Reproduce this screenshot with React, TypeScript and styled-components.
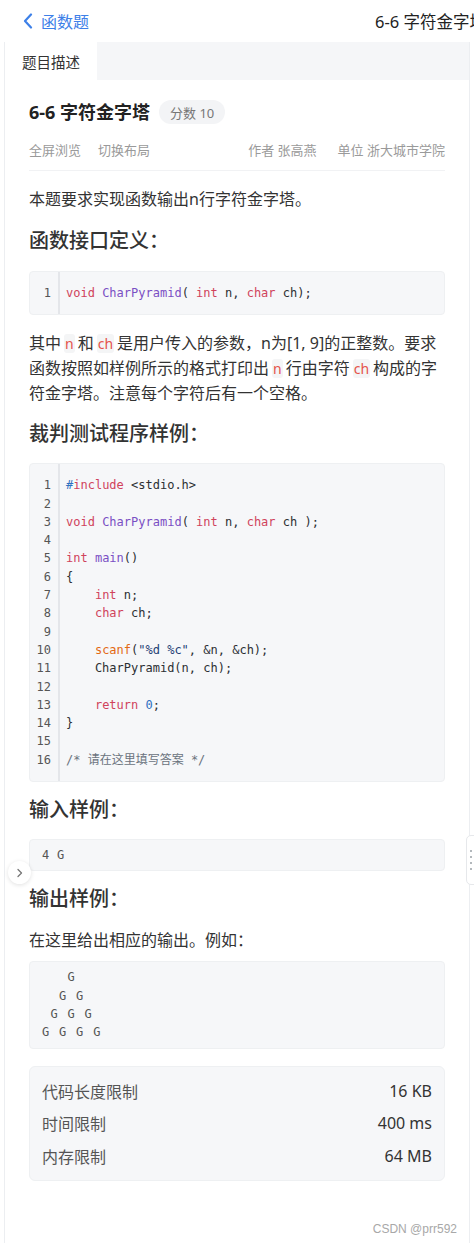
import React from "react";
import styled, { createGlobalStyle } from "styled-components";

const GlobalStyle = createGlobalStyle`
  html, body { margin: 0; padding: 0; background: #fff; }
  body {
    font-family: "Noto Sans", "Noto Sans CJK SC", sans-serif;
    color: #333;
    overflow-x: hidden;
  }
  * { box-sizing: border-box; }
`;

const Page = styled.div`
  position: relative;
  width: 474px;
  min-height: 1243px;
  background: #fff;
`;

const Header = styled.header`
  height: 42px;
  display: flex;
  align-items: center;
  overflow: hidden;
  background: #fff;
`;

const Back = styled.a`
  display: flex;
  align-items: center;
  gap: 8px;
  padding-left: 23px;
  color: #3d80e8;
  font-size: 16px;
  text-decoration: none;
  flex-shrink: 0;
`;

const HeaderTitle = styled.div`
  margin-left: 286px;
  flex-shrink: 0;
  white-space: nowrap;
  font-size: 16.5px;
  color: #222;
`;

const Panel = styled.section`
  margin: 0 4px;
  width: 466px;
  min-height: 1201px;
  border-left: 1px solid #eceef1;
  border-right: 1px solid #eceef1;
  display: flex;
  flex-direction: column;
`;

const TabBar = styled.div`
  height: 38px;
  background: #f5f6f8;
  display: flex;
`;

const Tab = styled.div`
  width: 92px;
  background: #fff;
  display: flex;
  align-items: center;
  justify-content: center;
  font-size: 14.5px;
  color: #333;
`;

const Body = styled.div`
  padding: 20px 24px 0;
  flex: 1;
`;

const TitleRow = styled.div`
  display: flex;
  align-items: center;
  height: 24px;
`;

const Title = styled.h1`
  margin: 0;
  font-size: 18px;
  font-weight: 700;
  color: #222;
  line-height: 24px;
`;

const Badge = styled.span`
  margin-left: 9px;
  height: 24px;
  padding: 0 11px;
  border-radius: 12px;
  background: #f3f4f6;
  color: #777;
  font-size: 13px;
  display: inline-flex;
  align-items: center;
`;

const MetaRow = styled.div`
  margin-top: 16px;
  padding-bottom: 10px;
  border-bottom: 1px solid #f1f2f4;
  display: flex;
  align-items: center;
  height: 31px;
  font-size: 13px;
  color: #9a9a9a;
  line-height: 20px;
`;

const MetaGroup = styled.div<{ $gap: number; $right?: boolean }>`
  display: flex;
  gap: ${(p) => p.$gap}px;
  margin-left: ${(p) => (p.$right ? "auto" : "0")};
`;

const Para = styled.p<{ $mt?: number }>`
  margin: ${(p) => p.$mt ?? 16}px 0 0;
  font-size: 16px;
  line-height: 25px;
  color: #333;
`;

const Heading = styled.h2<{ $mt?: number }>`
  margin: ${(p) => p.$mt ?? 14}px 0 0;
  font-size: 20px;
  font-weight: 500;
  line-height: 28px;
  color: #333;
`;

const InlineCode = styled.code`
  font-family: "Noto Sans", sans-serif;
  font-size: 14px;
  line-height: 18px;
  color: #e5534b;
  background: #f4f5f6;
  border-radius: 3px;
  padding: 0 1px;
  margin: 0 3px;
`;

const CodeBox = styled.div<{ $mt?: number }>`
  margin-top: ${(p) => p.$mt ?? 16}px;
  background: #f6f7f9;
  border: 1px solid #eef0f2;
  border-radius: 4px;
  display: flex;
  font-family: "DejaVu Sans Mono", "Noto Sans CJK SC", monospace;
  font-size: 12px;
  line-height: 18.3px;
`;

const Gutter = styled.div`
  width: 30px;
  padding: 12px 7px 12px 0;
  border-right: 2px solid #e4e6ea;
  text-align: right;
  color: #555;
`;

const CodeLines = styled.pre`
  margin: 0;
  padding: 12px 6px;
  font: inherit;
  color: #2c2f33;
  white-space: pre;
`;

const Tok = styled.span<{ $k: string }>`
  color: ${(p) =>
    ({
      kw: "#d0435c",
      fn: "#7a4fc4",
      call: "#e36a14",
      str: "#1f3f75",
      num: "#2e6fc0",
      hash: "#2e6fc0",
      com: "#6a737d",
      txt: "#2c2f33",
    } as Record<string, string>)[p.$k]};
`;

const SampleBox = styled.pre<{ $mt?: number; $spacing?: number }>`
  margin: ${(p) => p.$mt ?? 15}px 0 0;
  background: #f6f7f9;
  border: 1px solid #eef0f2;
  border-radius: 4px;
  padding: 6px 12px;
  font-family: "DejaVu Sans Mono", monospace;
  font-size: 12px;
  line-height: 18.3px;
  color: #555;
  letter-spacing: ${(p) => p.$spacing ?? 0.3}px;
`;

const Limits = styled.div`
  margin-top: 17px;
  background: #f6f7f9;
  border: 1px solid #eef0f2;
  border-radius: 6px;
  padding: 8px 12px 8px 12px;
`;

const LimitRow = styled.div`
  height: 32.5px;
  display: flex;
  align-items: center;
  justify-content: space-between;
  font-size: 16px;
`;

const LimitLabel = styled.span`
  color: #555;
`;

const LimitValue = styled.span`
  color: #333;
`;

const Watermark = styled.div`
  margin-top: 40px;
  padding: 0 12px 7px 0;
  text-align: right;
  font-family: "Liberation Sans", Arial, sans-serif;
  font-size: 12px;
  line-height: 16px;
  color: #a8a8a8;
`;

const SideToggle = styled.div`
  position: absolute;
  left: 8px;
  top: 861px;
  width: 23px;
  height: 23px;
  border-radius: 50%;
  background: #fff;
  box-shadow: 0 1px 4px rgba(0, 0, 0, 0.12);
  display: flex;
  align-items: center;
  justify-content: center;
`;

const SideHandle = styled.div`
  position: absolute;
  left: 466px;
  top: 835px;
  width: 14px;
  height: 50px;
  border-radius: 5px;
  background: #fff;
  border: 1px solid #e6e8eb;
  display: flex;
  flex-direction: column;
  align-items: flex-start;
  justify-content: center;
  gap: 4px;
  padding-left: 3px;
`;

const Dot = styled.span`
  width: 2px;
  height: 2px;
  border-radius: 50%;
  background: #9aa0a6;
`;

type Seg = [string, string];

const iface: Seg[][] = [
  [
    ["void", "kw"],
    [" ", "txt"],
    ["CharPyramid", "fn"],
    ["( ", "txt"],
    ["int", "kw"],
    [" n, ", "txt"],
    ["char", "kw"],
    [" ch);", "txt"],
  ],
];

const judge: Seg[][] = [
  [
    ["#", "hash"],
    ["include", "kw"],
    [" <stdio.h>", "txt"],
  ],
  [],
  [
    ["void", "kw"],
    [" ", "txt"],
    ["CharPyramid", "fn"],
    ["( ", "txt"],
    ["int", "kw"],
    [" n, ", "txt"],
    ["char", "kw"],
    [" ch );", "txt"],
  ],
  [],
  [
    ["int", "kw"],
    [" ", "txt"],
    ["main", "fn"],
    ["()", "txt"],
  ],
  [["{", "txt"]],
  [
    ["    ", "txt"],
    ["int", "kw"],
    [" n;", "txt"],
  ],
  [
    ["    ", "txt"],
    ["char", "kw"],
    [" ch;", "txt"],
  ],
  [],
  [
    ["    ", "txt"],
    ["scanf", "call"],
    ["(", "txt"],
    ['"%d %c"', "str"],
    [", &n, &ch);", "txt"],
  ],
  [["    CharPyramid(n, ch);", "txt"]],
  [],
  [
    ["    ", "txt"],
    ["return", "kw"],
    [" ", "txt"],
    ["0", "num"],
    [";", "txt"],
  ],
  [["}", "txt"]],
  [],
  [["/* 请在这里填写答案 */", "com"]],
];

function Code({ lines, mt }: { lines: Seg[][]; mt?: number }) {
  return (
    <CodeBox $mt={mt}>
      <Gutter>
        {lines.map((_, i) => (
          <div key={i}>{i + 1}</div>
        ))}
      </Gutter>
      <CodeLines>
        {lines.map((segs, i) => (
          <div key={i}>
            {segs.length === 0
              ? " "
              : segs.map(([t, k], j) => (
                  <Tok key={j} $k={k}>
                    {t}
                  </Tok>
                ))}
          </div>
        ))}
      </CodeLines>
    </CodeBox>
  );
}

export default function App() {
  return (
    <Page>
      <GlobalStyle />
      <Header>
        <Back>
          <svg width="10" height="16" viewBox="0 0 10 16" fill="none">
            <path d="M8 1.5L2 8l6 6.5" stroke="#3d80e8" strokeWidth="2.2" strokeLinecap="round" strokeLinejoin="round" />
          </svg>
          函数题
        </Back>
        <HeaderTitle>6-6 字符金字塔</HeaderTitle>
      </Header>
      <Panel>
        <TabBar>
          <Tab>题目描述</Tab>
        </TabBar>
        <Body>
          <TitleRow>
            <Title>6-6 字符金字塔</Title>
            <Badge>分数 10</Badge>
          </TitleRow>
          <MetaRow>
            <MetaGroup $gap={17}>
              <span>全屏浏览</span>
              <span>切换布局</span>
            </MetaGroup>
            <MetaGroup $gap={21} $right>
              <span>作者 张高燕</span>
              <span>单位 浙大城市学院</span>
            </MetaGroup>
          </MetaRow>
          <Para>本题要求实现函数输出n行字符金字塔。</Para>
          <Heading $mt={15}>函数接口定义：</Heading>
          <Code lines={iface} mt={16} />
          <Para>
            其中<InlineCode>n</InlineCode>和<InlineCode>ch</InlineCode>是用户传入的参数，n为[1, 9]的正整数。要求函数按照如样例所示的格式打印出<InlineCode>n</InlineCode>行由字符<InlineCode>ch</InlineCode>构成的字符金字塔。注意每个字符后有一个空格。
          </Para>
          <Heading>裁判测试程序样例：</Heading>
          <Code lines={judge} mt={15} />
          <Heading>输入样例：</Heading>
          <SampleBox>4 G</SampleBox>
          <Heading>输出样例：</Heading>
          <Para $mt={15}>在这里给出相应的输出。例如：</Para>
          <SampleBox $mt={8} $spacing={1.3}>{"   G\n  G G\n G G G\nG G G G"}</SampleBox>
          <Limits>
            <LimitRow>
              <LimitLabel>代码长度限制</LimitLabel>
              <LimitValue>16 KB</LimitValue>
            </LimitRow>
            <LimitRow>
              <LimitLabel>时间限制</LimitLabel>
              <LimitValue>400 ms</LimitValue>
            </LimitRow>
            <LimitRow>
              <LimitLabel>内存限制</LimitLabel>
              <LimitValue>64 MB</LimitValue>
            </LimitRow>
          </Limits>
        </Body>
        <Watermark>CSDN @prr592</Watermark>
      </Panel>
      <SideToggle>
        <svg width="8" height="10" viewBox="0 0 8 10" fill="none">
          <path d="M2 1.5L5.5 5 2 8.5" stroke="#777" strokeWidth="1.3" strokeLinecap="round" strokeLinejoin="round" />
        </svg>
      </SideToggle>
      <SideHandle>
        <Dot />
        <Dot />
        <Dot />
        <Dot />
      </SideHandle>
    </Page>
  );
}
